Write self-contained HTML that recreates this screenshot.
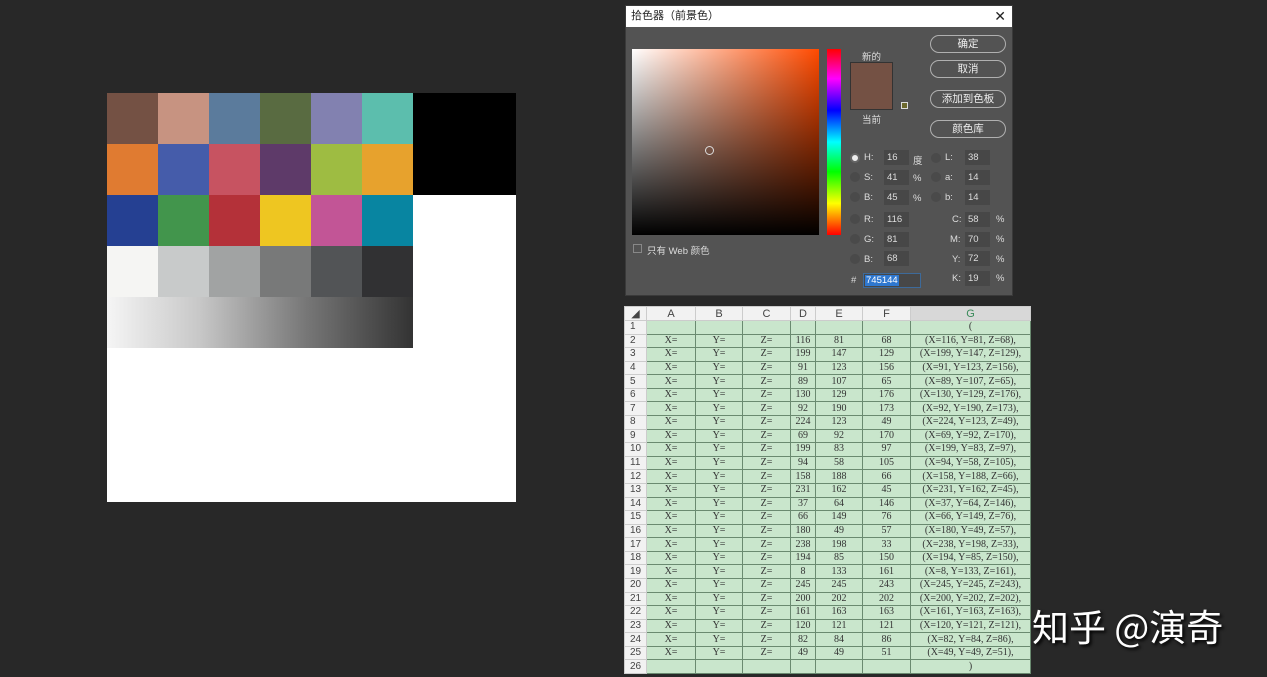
<!DOCTYPE html>
<html><head><meta charset="utf-8"><style>
*{margin:0;padding:0;box-sizing:border-box}
body{width:1267px;height:677px;background:#282828;position:relative;overflow:hidden;font-family:"Liberation Sans","Noto Sans CJK SC",sans-serif}
.a{position:absolute}
.cell{position:absolute;width:51px;height:51px}
.dlg{left:625px;top:5px;width:388px;height:291px;background:#535353;border:1px solid #3a3a3a}
.tb{left:0;top:0;width:386px;height:21px;background:#fff;color:#222;font-size:11px;line-height:21px;padding-left:5px}
.btn{position:absolute;left:304px;width:76px;height:18px;border:1px solid #b0b0b0;border-radius:9px;color:#eee;font-size:10.5px;text-align:center;line-height:16px}
.lbl{position:absolute;color:#ddd;font-size:9.5px}
.inp{position:absolute;width:25px;height:15px;background:#474747;color:#ddd;font-size:9.5px;line-height:15px;padding-left:3px}
.rad{position:absolute;width:10px;height:10px;border-radius:50%;background:#4a4a4a}
table{position:absolute;left:624px;top:306px;border-collapse:collapse;font-family:"Liberation Serif","Noto Serif CJK SC",serif;font-size:10px;color:#333;table-layout:fixed}
td{border:1px solid #6a8a70;height:13.58px;padding:0;text-align:center;background:#c9e6cc;line-height:12px;overflow:hidden;white-space:nowrap}
td.h{background:#f2f2f2;border-color:#ccc;font-family:"Liberation Sans",sans-serif;color:#444;text-align:left;padding-left:5px}
tr.hd td{background:#f2f2f2;border-color:#ccc;font-family:"Liberation Sans",sans-serif;color:#444;height:14px;font-size:11px}
</style></head><body>
<div class="a" style="left:107px;top:93px;width:409px;height:409px;background:#fff"></div>
<div class="a" style="left:413px;top:93px;width:103px;height:102px;background:#000"></div>
<div class="a" style="left:107px;top:297px;width:306px;height:51px;background:linear-gradient(90deg,#f5f5f5,#c8c8c8 30%,#777 65%,#333)"></div>
<div id="cc"></div>
<div class="a dlg">
<div class="a tb">拾色器（前景色）<span style="position:absolute;right:6px;font-size:14px">✕</span></div>
<div class="a" style="left:6px;top:43px;width:187px;height:186px;background:linear-gradient(to bottom,rgba(0,0,0,0),#000),linear-gradient(90deg,#fff,#ff4a00)"></div>
<div class="a" style="left:79px;top:140px;width:9px;height:9px;border:1px solid #ddd;border-radius:50%"></div>
<div class="a" style="left:201px;top:43px;width:14px;height:186px;background:linear-gradient(to bottom,#f00,#f0f 16%,#00f 33%,#0ff 50%,#0f0 66%,#ff0 83%,#f00)"></div>
<div class="lbl" style="left:236px;top:43px">新的</div>
<div class="a" style="left:224px;top:56px;width:43px;height:48px;background:#745144;border:1px solid #333"></div>
<div class="lbl" style="left:236px;top:106px">当前</div>
<div class="a" style="left:275px;top:96px;width:7px;height:7px;background:#6d6a2e;border:1px solid #ddd"></div>
<div class="btn" style="top:29px">确定</div>
<div class="btn" style="top:54px">取消</div>
<div class="btn" style="top:84px">添加到色板</div>
<div class="btn" style="top:114px">颜色库</div>
<div class="rad" style="left:224px;top:147px;background:#eee;border:2px solid #666"></div><div class="lbl" style="left:238px;top:146px">H:</div><div class="inp" style="left:258px;top:144px">16</div><div class="lbl" style="left:287px;top:147px">度</div>
<div class="rad" style="left:224px;top:166px"></div><div class="lbl" style="left:238px;top:166px">S:</div><div class="inp" style="left:258px;top:164px">41</div><div class="lbl" style="left:287px;top:167px">%</div>
<div class="rad" style="left:224px;top:186px"></div><div class="lbl" style="left:238px;top:186px">B:</div><div class="inp" style="left:258px;top:184px">45</div><div class="lbl" style="left:287px;top:187px">%</div>
<div class="rad" style="left:224px;top:208px"></div><div class="lbl" style="left:238px;top:208px">R:</div><div class="inp" style="left:258px;top:206px">116</div>
<div class="rad" style="left:224px;top:228px"></div><div class="lbl" style="left:238px;top:228px">G:</div><div class="inp" style="left:258px;top:226px">81</div>
<div class="rad" style="left:224px;top:248px"></div><div class="lbl" style="left:238px;top:248px">B:</div><div class="inp" style="left:258px;top:245px">68</div>
<div class="rad" style="left:305px;top:147px"></div><div class="lbl" style="left:319px;top:146px">L:</div><div class="inp" style="left:339px;top:144px">38</div>
<div class="rad" style="left:305px;top:166px"></div><div class="lbl" style="left:319px;top:166px">a:</div><div class="inp" style="left:339px;top:164px">14</div>
<div class="rad" style="left:305px;top:186px"></div><div class="lbl" style="left:319px;top:186px">b:</div><div class="inp" style="left:339px;top:184px">14</div>
<div class="lbl" style="left:326px;top:208px">C:</div><div class="inp" style="left:339px;top:206px">58</div><div class="lbl" style="left:370px;top:208px">%</div>
<div class="lbl" style="left:324px;top:228px">M:</div><div class="inp" style="left:339px;top:226px">70</div><div class="lbl" style="left:370px;top:228px">%</div>
<div class="lbl" style="left:326px;top:248px">Y:</div><div class="inp" style="left:339px;top:245px">72</div><div class="lbl" style="left:370px;top:248px">%</div>
<div class="lbl" style="left:326px;top:267px">K:</div><div class="inp" style="left:339px;top:265px">19</div><div class="lbl" style="left:370px;top:267px">%</div>
<div class="lbl" style="left:225px;top:269px">#</div>
<div class="a" style="left:237px;top:267px;width:58px;height:15px;background:#474747;border:1px solid #3d6a9a"></div>
<div class="a" style="left:239px;top:269px;height:11px;background:#2f78d0;color:#fff;font-size:9.5px;line-height:11px;padding:0 1px">745144</div>
<div class="a" style="left:7px;top:238px;width:9px;height:9px;border:1px solid #888"></div>
<div class="lbl" style="left:21px;top:237px">只有 Web 颜色</div>
</div>
<table id="t"><colgroup><col style="width:22px"><col style="width:49px"><col style="width:47px"><col style="width:48px"><col style="width:25px"><col style="width:47px"><col style="width:48px"><col style="width:120px"></colgroup></table>
<div class="a" style="left:1032px;top:598px;color:#fff;font-size:37px;font-family:'Noto Sans CJK SC',sans-serif;text-shadow:2px 2px 3px #000">知乎 @演奇</div>
<script>
var d=[[116,81,68],[199,147,129],[91,123,156],[89,107,65],[130,129,176],[92,190,173],[224,123,49],[69,92,170],[199,83,97],[94,58,105],[158,188,66],[231,162,45],[37,64,146],[66,149,76],[180,49,57],[238,198,33],[194,85,150],[8,133,161],[245,245,243],[200,202,202],[161,163,163],[120,121,121],[82,84,86],[49,49,51]];
var cc='';d.forEach(function(c,i){cc+='<div class="cell" style="left:'+(107+(i%6)*51)+'px;top:'+(93+Math.floor(i/6)*51)+'px;background:rgb('+c+')"></div>'});
document.getElementById('cc').innerHTML=cc;
var h='<tr class="hd"><td>◢</td><td>A</td><td>B</td><td>C</td><td>D</td><td>E</td><td>F</td><td style="background:#d8d8d8;color:#3a8a5a">G</td></tr>';
h+='<tr><td class="h">1</td><td></td><td></td><td></td><td></td><td></td><td></td><td>(</td></tr>';
d.forEach(function(c,i){h+='<tr><td class="h">'+(i+2)+'</td><td>X=</td><td>Y=</td><td>Z=</td><td>'+c[0]+'</td><td>'+c[1]+'</td><td>'+c[2]+'</td><td>(X='+c[0]+', Y='+c[1]+', Z='+c[2]+'),</td></tr>'});
h+='<tr><td class="h">26</td><td></td><td></td><td></td><td></td><td></td><td></td><td>)</td></tr>';
document.getElementById('t').innerHTML+=h;
</script>
</body></html>
